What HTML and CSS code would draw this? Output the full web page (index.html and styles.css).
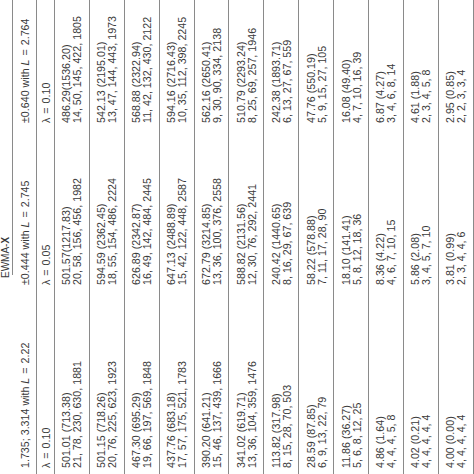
FILE: index.html
```html
<!DOCTYPE html>
<html>
<head>
<meta charset="utf-8">
<link rel="stylesheet" href="styles.css">
</head>
<body>
<div class="stage">
  <div class="table">
    <div class="row super">
      <div class="cell"></div>
      <div class="cell span"><span class="ewma">EWMA-<span class="xbar">X</span></span></div>
    </div>
    <div class="row head">
      <div class="cell">1.735; 3.314 with <i>L</i> <span class="eq">=</span> 2.22</div>
      <div class="cell">±0.444 with <i>L</i> <span class="eq">=</span> 2.745</div>
      <div class="cell">±0.640 with <i>L</i> <span class="eq">=</span> 2.764</div>
    </div>
    <div class="row lam">
      <div class="cell">λ <span class="eq">=</span> 0.10</div>
      <div class="cell">λ <span class="eq">=</span> 0.05</div>
      <div class="cell">λ <span class="eq">=</span> 0.10</div>
    </div>
    <div class="row data">
      <div class="cell">501.01 (713.38)<br>21, 78, 230, 630, 1881</div>
      <div class="cell">501.57(1217.83)<br>20, 58, 156, 456, 1982</div>
      <div class="cell">486.29(1536.20)<br>14, 50, 145, 422, 1805</div>
    </div>
    <div class="row data">
      <div class="cell">501.15 (718.26)<br>20, 76, 225, 623, 1923</div>
      <div class="cell">594.59 (2362.45)<br>18, 55, 154, 486, 2224</div>
      <div class="cell">542.13 (2195.01)<br>13, 47, 144, 443, 1973</div>
    </div>
    <div class="row data">
      <div class="cell">467.30 (695.29)<br>19, 66, 197, 569, 1848</div>
      <div class="cell">626.89 (2342.87)<br>16, 49, 142, 484, 2445</div>
      <div class="cell">568.88 (2322.94)<br>11, 42, 132, 430, 2122</div>
    </div>
    <div class="row data">
      <div class="cell">437.76 (683.18)<br>17, 57, 175, 521, 1783</div>
      <div class="cell">647.13 (2488.89)<br>15, 42, 122, 448, 2587</div>
      <div class="cell">594.16 (2716.43)<br>10, 35, 112, 398, 2245</div>
    </div>
    <div class="row data">
      <div class="cell">390.20 (641.21)<br>15, 46, 137, 439, 1666</div>
      <div class="cell">672.79 (3214.85)<br>13, 36, 100, 376, 2558</div>
      <div class="cell">562.16 (2650.41)<br>9, 30, 90, 334, 2138</div>
    </div>
    <div class="row data">
      <div class="cell">341.02 (619.71)<br>13, 36, 104, 359, 1476</div>
      <div class="cell">588.82 (2131.56)<br>12, 30, 76, 292, 2441</div>
      <div class="cell">510.79 (2293.24)<br>8, 25, 69, 257, 1946</div>
    </div>
    <div class="row data">
      <div class="cell">113.82 (317.98)<br>8, 15, 28, 70, 503</div>
      <div class="cell">240.42 (1440.65)<br>8, 16, 29, 67, 639</div>
      <div class="cell">242.38 (1893.71)<br>6, 13, 27, 67, 559</div>
    </div>
    <div class="row data">
      <div class="cell">28.59 (87.85)<br>6, 9, 13, 22, 79</div>
      <div class="cell">58.22 (578.88)<br>7, 11, 17, 28, 90</div>
      <div class="cell">47.76 (550.19)<br>5, 9, 15, 27, 105</div>
    </div>
    <div class="row data">
      <div class="cell">11.86 (36.27)<br>5, 6, 8, 12, 25</div>
      <div class="cell">18.10 (141.41)<br>5, 8, 12, 18, 36</div>
      <div class="cell">16.08 (49.40)<br>4, 7, 10, 16, 39</div>
    </div>
    <div class="row data">
      <div class="cell">4.86 (1.64)<br>4, 4, 4, 5, 8</div>
      <div class="cell">8.36 (4.22)<br>4, 6, 7, 10, 15</div>
      <div class="cell">6.87 (4.27)<br>3, 4, 6, 8, 14</div>
    </div>
    <div class="row data">
      <div class="cell">4.02 (0.21)<br>4, 4, 4, 4, 4</div>
      <div class="cell">5.86 (2.08)<br>3, 4, 5, 7, 10</div>
      <div class="cell">4.61 (1.88)<br>2, 3, 4, 5, 8</div>
    </div>
    <div class="row data">
      <div class="cell">4.00 (0.00)<br>4, 4, 4, 4, 4</div>
      <div class="cell">3.81 (0.99)<br>2, 3, 4, 4, 6</div>
      <div class="cell">2.95 (0.85)<br>2, 2, 3, 3, 4</div>
    </div>
  </div>
</div>
</body>
</html>
```

FILE: styles.css
```css
html, body {
  margin: 0;
  padding: 0;
  background: #ffffff;
}

.stage {
  width: 474px;
  height: 474px;
  overflow: hidden;
}

.table {
  width: 474px;
  height: 474px;
  transform: rotate(-90deg);
  transform-origin: center center;
  font-family: "Liberation Sans", Arial, sans-serif;
  font-size: 10.7px;
  color: #3a3a3a;
  display: flex;
  flex-direction: column;
}

.row {
  display: grid;
  grid-template-columns: 183px 162px minmax(0, 1fr);
  padding-left: 6px;
  box-sizing: border-box;
  align-items: center;
  white-space: nowrap;
  flex: none;
}

.cell {
  line-height: 11px;
}

.eq {
  padding: 0 1px;
}

.super {
  height: 13px;
  padding-left: 0;
  grid-template-columns: 189px minmax(0, 1fr);
  align-items: stretch;
}

.span {
  margin-left: 10px;
  border-bottom: 1px solid #8a8a8a;
  line-height: 11px;
}

.ewma {
  display: inline-block;
  margin-left: -3px;
  font-size: 10px;
}

.xbar {
  font-weight: bold;
  text-decoration: overline;
}

.head {
  height: 24px;
  border-bottom: 1px solid #8a8a8a;
  padding-top: 1px;
}

.lam {
  height: 18px;
  border-bottom: 1px solid #8a8a8a;
  padding-top: 2px;
}

.data {
  height: 34.9px;
  border-bottom: 1px solid #8a8a8a;
  padding-top: 1px;
}
```
